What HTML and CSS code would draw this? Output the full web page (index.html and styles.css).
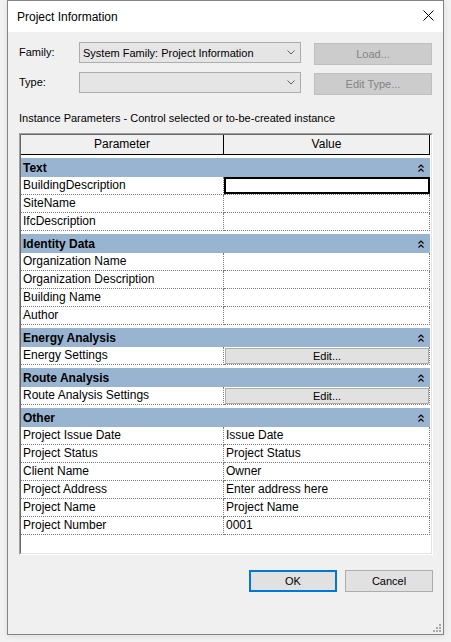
FILE: index.html
```html
<!DOCTYPE html>
<html>
<head>
<meta charset="utf-8">
<title>Project Information</title>
<link rel="stylesheet" href="styles.css">
</head>
<body>
<div class="window">
  <div class="titlebar">
    <span class="title">Project Information</span>
    <svg class="close" width="11" height="11" viewBox="0 0 11 11"><path d="M0.5 0.5 L10.5 10.5 M10.5 0.5 L0.5 10.5" fill="none" stroke="#000" stroke-width="1"/></svg>
  </div>
  <div class="content">
    <div class="field">
      <span class="label">Family:</span>
      <div class="combo"><span class="combo-text">System Family: Project Information</span><svg class="chev" width="8" height="5" viewBox="0 0 8 5"><path d="M0.5 0.5 L4 4 L7.5 0.5" fill="none" stroke="#606060" stroke-width="1"/></svg></div>
      <div class="btn disabled">Load...</div>
    </div>
    <div class="field">
      <span class="label">Type:</span>
      <div class="combo"><span class="combo-text"></span><svg class="chev" width="8" height="5" viewBox="0 0 8 5"><path d="M0.5 0.5 L4 4 L7.5 0.5" fill="none" stroke="#606060" stroke-width="1"/></svg></div>
      <div class="btn disabled">Edit Type...</div>
    </div>
    <div class="info">Instance Parameters - Control selected or to-be-created instance</div>

    <div class="grid">
      <div class="grid-inner">
        <div class="ghead">
          <div>Parameter</div>
          <div>Value</div>
        </div>

        <div class="group">
          <div class="gtitle"><span>Text</span><svg class="collapse" width="6" height="8" viewBox="0 0 6 8"><path d="M0.5 3.5 L3 1 L5.5 3.5 M0.5 7.5 L3 5 L5.5 7.5" fill="none" stroke="#000" stroke-width="1.2"/></svg></div>
          <div class="row"><div>BuildingDescription</div><div class="sel"></div></div>
          <div class="row"><div>SiteName</div><div></div></div>
          <div class="row"><div>IfcDescription</div><div></div></div>
        </div>

        <div class="group">
          <div class="gtitle"><span>Identity Data</span><svg class="collapse" width="6" height="8" viewBox="0 0 6 8"><path d="M0.5 3.5 L3 1 L5.5 3.5 M0.5 7.5 L3 5 L5.5 7.5" fill="none" stroke="#000" stroke-width="1.2"/></svg></div>
          <div class="row"><div>Organization Name</div><div></div></div>
          <div class="row"><div>Organization Description</div><div></div></div>
          <div class="row"><div>Building Name</div><div></div></div>
          <div class="row"><div>Author</div><div></div></div>
        </div>

        <div class="group">
          <div class="gtitle"><span>Energy Analysis</span><svg class="collapse" width="6" height="8" viewBox="0 0 6 8"><path d="M0.5 3.5 L3 1 L5.5 3.5 M0.5 7.5 L3 5 L5.5 7.5" fill="none" stroke="#000" stroke-width="1.2"/></svg></div>
          <div class="row"><div>Energy Settings</div><div class="edit"><div class="editbtn">Edit...</div></div></div>
        </div>

        <div class="group">
          <div class="gtitle"><span>Route Analysis</span><svg class="collapse" width="6" height="8" viewBox="0 0 6 8"><path d="M0.5 3.5 L3 1 L5.5 3.5 M0.5 7.5 L3 5 L5.5 7.5" fill="none" stroke="#000" stroke-width="1.2"/></svg></div>
          <div class="row"><div>Route Analysis Settings</div><div class="edit"><div class="editbtn">Edit...</div></div></div>
        </div>

        <div class="group">
          <div class="gtitle"><span>Other</span><svg class="collapse" width="6" height="8" viewBox="0 0 6 8"><path d="M0.5 3.5 L3 1 L5.5 3.5 M0.5 7.5 L3 5 L5.5 7.5" fill="none" stroke="#000" stroke-width="1.2"/></svg></div>
          <div class="row"><div>Project Issue Date</div><div>Issue Date</div></div>
          <div class="row"><div>Project Status</div><div>Project Status</div></div>
          <div class="row"><div>Client Name</div><div>Owner</div></div>
          <div class="row"><div>Project Address</div><div>Enter address here</div></div>
          <div class="row"><div>Project Name</div><div>Project Name</div></div>
          <div class="row"><div>Project Number</div><div>0001</div></div>
        </div>
      </div>
    </div>

    <div class="footer">
      <div class="dlgbtn default">OK</div>
      <div class="dlgbtn">Cancel</div>
    </div>
  </div>
  <svg class="grip" width="8" height="8" viewBox="0 0 8 8">
    <rect x="6" y="0" width="2" height="2" fill="#a8a8a8"/>
    <rect x="3" y="3" width="2" height="2" fill="#a8a8a8"/>
    <rect x="6" y="3" width="2" height="2" fill="#a8a8a8"/>
    <rect x="0" y="6" width="2" height="2" fill="#a8a8a8"/>
    <rect x="3" y="6" width="2" height="2" fill="#a8a8a8"/>
    <rect x="6" y="6" width="2" height="2" fill="#a8a8a8"/>
  </svg>
</div>
</body>
</html>
```
FILE: styles.css
```css
* { box-sizing: border-box; }
html, body { margin: 0; padding: 0; }
body {
  background: #f2f2f2;
  font-family: "Liberation Sans", Arial, sans-serif;
  font-size: 12px;
  color: #000;
  width: 451px;
  height: 642px;
  overflow: hidden;
}
.window {
  position: relative;
  margin-left: 7px;
  width: 437px;
  height: 635px;
  border: 1px solid #858585;
  background: #f0f0f0;
  display: flex;
  flex-direction: column;
  box-shadow: 0 1px 6px rgba(0, 0, 0, 0.10);
}
.titlebar {
  flex: none;
  height: 31px;
  background: #fff;
  display: flex;
  align-items: center;
  justify-content: space-between;
  padding: 0 9px 0 9px;
}
.title { line-height: 16px; }
.close { margin-bottom: 2px; }
.content {
  flex: 1;
  padding: 10px 10px 0 11px;
  display: flex;
  flex-direction: column;
}
.field {
  display: flex;
  align-items: flex-start;
  height: 30px;
  font-size: 11px;
}
.label { width: 60px; line-height: 21px; }
.combo {
  width: 222px;
  height: 21px;
  border: 1px solid #adadad;
  background: #e5e5e5;
  display: flex;
  align-items: center;
  padding-left: 3px;
}
.combo-text { line-height: 16px; }
.chev { margin-left: auto; margin-right: 5px; }
.btn {
  margin-left: 13px;
  margin-top: 1px;
  width: 118px;
  height: 22px;
  border: 1px solid #bfbfbf;
  background: #cccccc;
  text-align: center;
  line-height: 20px;
}
.btn.disabled { color: #838383; }
.info {
  margin-top: 8px;
  line-height: 16px;
  font-size: 11px;
}
.grid {
  margin-top: 7px;
  width: 414px;
  height: 422px;
  border: 1px solid;
  border-color: #a0a0a0 #ffffff #ffffff #a0a0a0;
}
.grid-inner {
  height: 100%;
  border: 1px solid;
  border-color: #696969 #e3e3e3 #e3e3e3 #696969;
  background: #fff;
}
.ghead {
  display: grid;
  grid-template-columns: 203px 206px;
  height: 20px;
  background: #f0f0f0;
  width: 409px;
}
.ghead > div {
  border-right: 1px solid #000;
  border-bottom: 1px solid #000;
  text-align: center;
  line-height: 18px;
}
.group { margin-top: 3px; width: 409px; }
.gtitle {
  height: 19px;
  background: #99b4d1;
  font-weight: bold;
  display: flex;
  align-items: center;
  justify-content: space-between;
  padding: 0 6px 0 2px;
  line-height: 16px;
}
.row {
  display: grid;
  grid-template-columns: 203px 206px;
  height: 18px;
}
.row > div {
  border-right: 1px dotted #7a7a7a;
  border-bottom: 1px dotted #7a7a7a;
  padding-left: 2px;
  line-height: 16px;
  white-space: nowrap;
  overflow: hidden;
}
.row > div.sel {
  border-right: none;
  box-shadow: inset 0 0 0 2px #000;
}
.row > div.edit { padding: 0; }
.editbtn {
  margin: 1px 0 0 1px;
  width: 204px;
  height: 16px;
  background: #e1e1e1;
  border: 1px solid #adadad;
  text-align: center;
  line-height: 14px;
  font-size: 11px;
}
.footer {
  display: flex;
  justify-content: flex-end;
  gap: 8px;
  margin-top: 15px;
  font-size: 11px;
}
.dlgbtn {
  width: 88px;
  height: 22px;
  border: 1px solid #adadad;
  background: #e1e1e1;
  text-align: center;
  line-height: 20px;
}
.dlgbtn.default {
  border: 2px solid #0078d7;
  line-height: 18px;
}
.grip {
  position: absolute;
  right: 2px;
  bottom: 2px;
}
```
